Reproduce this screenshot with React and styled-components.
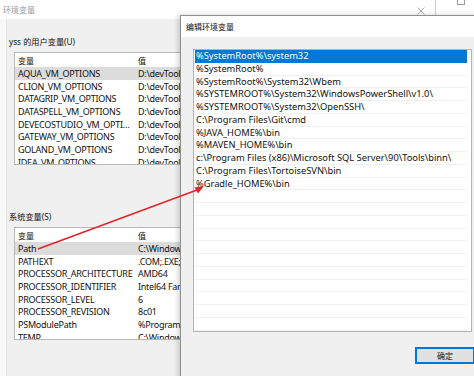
import React from "react";
import styled, { createGlobalStyle } from "styled-components";

const GlobalStyle = createGlobalStyle`
  html, body { margin: 0; padding: 0; overflow: hidden; background: #f0f0f0; }
  body { font-family: "Noto Sans", "Noto Sans CJK SC", sans-serif; }
`;

const FONT = `"Noto Sans", "Noto Sans CJK SC", sans-serif`;

const Desktop = styled.div`
  position: relative;
  width: 474px;
  height: 376px;
  overflow: hidden;
  background: #f0f0f0;
  font-family: ${FONT};
  font-size: 9px;
  color: #111;
`;

const BackWindow = styled.div`
  position: absolute;
  left: 0;
  top: 0;
  width: 435px;
  height: 376px;
  border-right: 1px solid #cfcfcf;
  display: flex;
  flex-direction: column;
`;

const TitleBar = styled.div`
  height: ${(p) => p.$h}px;
  flex: none;
  background: #ffffff;
  display: flex;
  align-items: center;
  padding-left: ${(p) => p.$pad}px;
`;

const TitleText = styled.span`
  flex: 1;
  font-size: 8px;
  color: ${(p) => p.$color};
  line-height: 1;
  white-space: nowrap;
`;

const CloseIcon = styled.svg`
  width: 8px;
  height: 8px;
  margin-right: 10px;
  margin-top: 3px;
`;

const BackBody = styled.div`
  flex: 1;
  background: #f0f0f0;
  border-left: 6px solid #f8f8f8;
  box-shadow: inset 1px 0 0 #e6e6e6;
  padding-left: 3px;
  display: flex;
  flex-direction: column;
`;

const GroupLabel = styled.div`
  margin-top: ${(p) => p.$mt}px;
  height: 12px;
  line-height: 12px;
  font-size: 8.2px;
  color: #111;
  white-space: nowrap;
`;

const VarList = styled.div`
  margin-top: 4px;
  margin-left: 5px;
  width: 174px;
  height: 113px;
  box-sizing: border-box;
  border: 1px solid #b8b8b8;
  border-right: none;
  background: #ffffff;
  overflow: hidden;
`;

const VarRow = styled.div`
  display: grid;
  grid-template-columns: 120px 1fr;
  height: ${(p) => (p.$header ? 14 : 12.7)}px;
  align-items: center;
  background: ${(p) => (p.$selected ? "#dcdcdc" : "transparent")};
`;

const Cell = styled.div`
  padding: 0 1px 0 3px;
  white-space: nowrap;
  overflow: hidden;
  text-overflow: ${(p) => (p.$clip ? "clip" : "ellipsis")};
  font-size: ${(p) => (p.$cjk ? 8 : 9)}px;
  letter-spacing: ${(p) => (p.$cjk ? 0 : -0.25)}px;
  line-height: 11px;
  color: #111;
`;

const FrontDialog = styled.div`
  position: absolute;
  left: 180px;
  top: 15px;
  width: 376px;
  height: 380px;
  box-sizing: border-box;
  border: 1px solid #8f8f8f;
  box-shadow: -2px 0 5px rgba(0, 0, 0, 0.18);
  background: #f0f0f0;
  display: flex;
  flex-direction: column;
`;

const DialogBody = styled.div`
  padding: 12px 12px 0 12px;
  display: flex;
  flex-direction: column;
`;

const PathList = styled.div`
  width: 279px;
  height: 283px;
  box-sizing: border-box;
  border: 1px solid #b4b4b4;
  background: #ffffff;
  padding: 0 4px 0 1px;
  overflow: hidden;
`;

const PathRow = styled.div`
  height: 12.75px;
  box-sizing: border-box;
  border-bottom: 1px solid ${(p) => (p.$selected ? "#0078d7" : "#f1f1f1")};
  background: ${(p) => (p.$selected ? "#0078d7" : "transparent")};
  color: ${(p) => (p.$selected ? "#ffffff" : "#111")};
  padding-left: 1px;
  font-size: 9.3px;
  line-height: 11.5px;
  white-space: nowrap;
  overflow: hidden;
`;

const Footer = styled.div`
  margin-top: 15px;
  display: flex;
  justify-content: flex-end;
  gap: 8px;
`;

const Button = styled.button`
  width: 60px;
  height: 17px;
  box-sizing: border-box;
  padding: 0;
  border: 1px solid ${(p) => (p.$primary ? "#0078d7" : "#adadad")};
  box-shadow: ${(p) => (p.$primary ? "inset 0 0 0 1px #0078d7" : "none")};
  background: #e1e1e1;
  font-family: ${FONT};
  font-size: 8px;
  color: #111;
  line-height: 1;
`;

const OtherWindow = styled.div`
  position: absolute;
  left: 436px;
  top: 0;
  width: 40px;
  height: 15px;
  background: #ffffff;
`;

const MaxIcon = styled.div`
  position: absolute;
  left: 21px;
  top: -4px;
  width: 6px;
  height: 7px;
  border: 1px solid #9a9a9a;
`;

const Overlay = styled.svg`
  position: absolute;
  left: 0;
  top: 0;
  width: 474px;
  height: 376px;
  pointer-events: none;
`;

const userVars = [
  "AQUA_VM_OPTIONS",
  "CLION_VM_OPTIONS",
  "DATAGRIP_VM_OPTIONS",
  "DATASPELL_VM_OPTIONS",
  "DEVECOSTUDIO_VM_OPTIONS",
  "GATEWAY_VM_OPTIONS",
  "GOLAND_VM_OPTIONS",
  "IDEA_VM_OPTIONS",
];

const sysVars = [
  ["Path", "C:\\Windows"],
  ["PATHEXT", ".COM;.EXE;"],
  ["PROCESSOR_ARCHITECTURE", "AMD64"],
  ["PROCESSOR_IDENTIFIER", "Intel64 Far"],
  ["PROCESSOR_LEVEL", "6"],
  ["PROCESSOR_REVISION", "8c01"],
  ["PSModulePath", "%Program"],
  ["TEMP", "C:\\Window"],
];

const paths = [
  "%SystemRoot%\\system32",
  "%SystemRoot%",
  "%SystemRoot%\\System32\\Wbem",
  "%SYSTEMROOT%\\System32\\WindowsPowerShell\\v1.0\\",
  "%SYSTEMROOT%\\System32\\OpenSSH\\",
  "C:\\Program Files\\Git\\cmd",
  "%JAVA_HOME%\\bin",
  "%MAVEN_HOME%\\bin",
  "c:\\Program Files (x86)\\Microsoft SQL Server\\90\\Tools\\binn\\",
  "C:\\Program Files\\TortoiseSVN\\bin",
  "%Gradle_HOME%\\bin",
];

export default function App() {
  const rows = [...paths, ...Array(12).fill("")];
  return (
    <Desktop>
      <GlobalStyle />
      <BackWindow>
        <TitleBar $h={19} $pad={3}>
          <TitleText $color="#9a9a9a">环境变量</TitleText>
          <CloseIcon viewBox="0 0 8 8">
            <path d="M0.5 0.5 L7.5 7.5 M7.5 0.5 L0.5 7.5" stroke="#a0a0a0" strokeWidth="0.9" />
          </CloseIcon>
        </TitleBar>
        <BackBody>
          <GroupLabel $mt={17}>yss 的用户变量(U)</GroupLabel>
          <VarList>
            <VarRow $header>
              <Cell $cjk>变量</Cell>
              <Cell $cjk>值</Cell>
            </VarRow>
            {userVars.map((v, i) => (
              <VarRow key={v} $selected={i === 0}>
                <Cell>{v}</Cell>
                <Cell $clip>D:\devTool</Cell>
              </VarRow>
            ))}
          </VarList>
          <GroupLabel $mt={46}>系统变量(S)</GroupLabel>
          <VarList>
            <VarRow $header>
              <Cell $cjk>变量</Cell>
              <Cell $cjk>值</Cell>
            </VarRow>
            {sysVars.map(([k, v], i) => (
              <VarRow key={k} $selected={i === 0}>
                <Cell>{k}</Cell>
                <Cell $clip>{v}</Cell>
              </VarRow>
            ))}
          </VarList>
        </BackBody>
      </BackWindow>

      <OtherWindow>
        <MaxIcon />
      </OtherWindow>

      <FrontDialog>
        <TitleBar $h={21} $pad={5}>
          <TitleText $color="#111">编辑环境变量</TitleText>
        </TitleBar>
        <DialogBody>
          <PathList>
            {rows.map((p, i) => (
              <PathRow key={i} $selected={i === 0}>
                {p}
              </PathRow>
            ))}
          </PathList>
          <Footer>
            <Button $primary>确定</Button>
            <Button>取消</Button>
          </Footer>
        </DialogBody>
      </FrontDialog>

      <Overlay viewBox="0 0 474 376">
        <line x1="38" y1="249" x2="197" y2="190" stroke="#e0262b" strokeWidth="1.6" />
        <path d="M204 186 L194.5 187.5 L198 193.5 Z" fill="#e0262b" />
      </Overlay>
    </Desktop>
  );
}
